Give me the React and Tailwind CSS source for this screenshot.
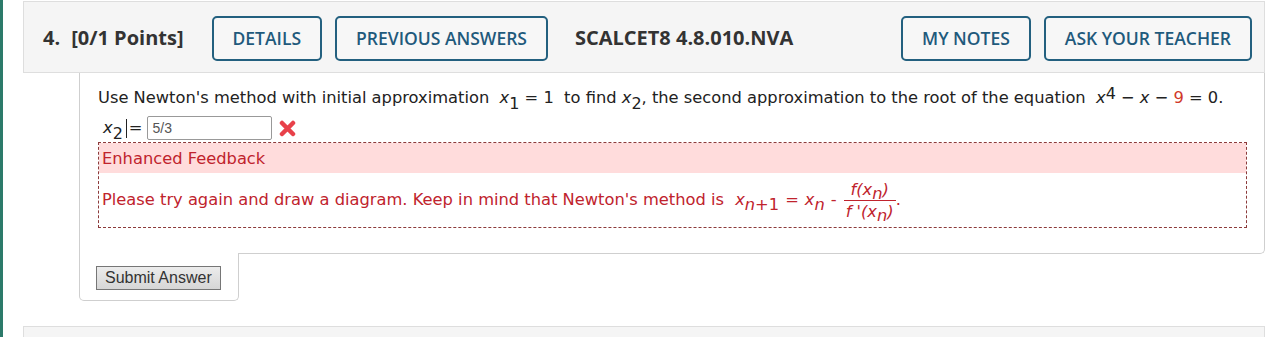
import React from 'react';

const btn =
  "h-[45px] px-[19px] pt-[2px] rounded-[5px] border-2 border-[#23607f] bg-[#f7f7f7] text-[#1f5a7c] text-[17.5px] font-semibold leading-none flex items-center";

const X = ({ sub }) => (
  <span className="italic whitespace-nowrap">
    x<sub className="not-italic text-[16px] relative top-[2px] align-sub leading-none">{sub}</sub>
  </span>
);

const App = () => {
  return (
    <div className="min-h-[337px] w-[1275px] overflow-hidden bg-white border-l-[3px] border-[#2c7a6a] pr-[10px]">
      {/* question header */}
      <div
        className="ml-[20px] mt-px h-[72px] flex items-center border border-[#dedede] bg-[#f5f5f5] pl-[19px] pr-[12px] pt-[2px] text-[#333]"
        style={{ fontFamily: '"Open Sans", sans-serif' }}
      >
        <span className="text-[20px] font-bold">4.</span>
        <span className="ml-[11px] text-[20px] font-bold">[0/1 Points]</span>
        <button className={btn + " ml-[28px]"}>DETAILS</button>
        <button className={btn + " ml-[13px]"}>PREVIOUS ANSWERS</button>
        <span className="ml-[27px] text-[20px] font-bold">SCALCET8 4.8.010.NVA</span>
        <div className="ml-auto flex gap-[13px]">
          <button className={btn}>MY NOTES</button>
          <button className={btn}>ASK YOUR TEACHER</button>
        </div>
      </div>

      {/* question body */}
      <div className="ml-[76px]" style={{ fontFamily: '"DejaVu Sans", Verdana, sans-serif' }}>
        <div className="border-l border-r border-b border-[#cfcfcf] rounded-br-[5px] bg-white pl-[18px] pr-[17px] pt-[13px] pb-[25px]">
          <p className="text-[16.3px] leading-[23px] text-[#222] whitespace-nowrap">
            Use Newton's method with initial approximation&nbsp; <X sub="1" /> = 1&nbsp; to find <X sub="2" />, the second
            approximation to the root of the equation&nbsp; <span className="italic">x</span>
            <sup className="text-[16px] relative -top-[4px] leading-none">4</sup> − <span className="italic">x</span> −{' '}
            <span className="text-[#d0392b]">9</span> = 0.
          </p>
          <div className="flex items-end h-[32px] pb-[2px] text-[16.3px] text-[#222]">
            <span className="ml-[5px]">
              <X sub="2" />
            </span>
            <span className="ml-[3px] mb-[2px] w-px h-[19px] bg-[#222]" />
            <span className="ml-[2px]">=</span>
            <input
              readOnly
              value="5/3"
              className="ml-[5px] w-[125px] h-[24px] border border-[#999] rounded-[2px] px-[4px] text-[14px] text-[#555] bg-white outline-none"
              style={{ fontFamily: '"Liberation Sans", Arial, sans-serif' }}
            />
            <svg className="ml-[7px] mb-[3px]" width="17" height="17" viewBox="0 0 17 17">
              <path d="M3 3 L14 14 M14 3 L3 14" stroke="#e8414a" strokeWidth="4.5" strokeLinecap="round" />
            </svg>
          </div>
          <div className="border border-dashed border-[#8c3b3b] text-[#c0232d]">
            <div className="h-[30px] flex items-center bg-[#ffdcdc] px-[3px] pt-[2px] text-[16.3px]">Enhanced Feedback</div>
            <div className="h-[54px] flex items-center px-[3px] text-[16.3px] whitespace-nowrap">
              <span>Please try again and draw a diagram. Keep in mind that Newton's method is&nbsp;</span>
              <span className="ml-[6px] italic">x</span>
              <span className="relative top-[5px]">
                <span className="italic">n</span>+1
              </span>
              <span className="ml-[6px]">=</span>
              <span className="ml-[6px] italic">x</span>
              <span className="italic relative top-[5px]">n</span>
              <span className="ml-[6px]">-</span>
              <span className="ml-[7px] inline-flex flex-col items-center leading-[21px] italic">
                <span className="px-[2px]">
                  f(x<span className="relative top-[4px]">n</span>)
                </span>
                <span className="px-[2px] border-t border-[#c0232d]">
                  f '(x<span className="relative top-[4px]">n</span>)
                </span>
              </span>
              <span>.</span>
            </div>
          </div>
        </div>
        <div className="-mt-px w-[160px] bg-white border-l border-r border-b border-[#cfcfcf] rounded-b-[5px] pl-[16px] pt-[13px] pb-[10px]">
          <button
            className="h-[24px] px-[8px] border border-[#767676] bg-gradient-to-b from-[#ececec] to-[#d6d6d6] text-[16px] text-[#333] leading-none"
            style={{ fontFamily: '"Liberation Sans", Arial, sans-serif' }}
          >
            Submit Answer
          </button>
        </div>
      </div>

      {/* next question header */}
      <div className="ml-[20px] mt-[25px] h-[40px] border border-[#dedede] bg-[#f5f5f5]" />
    </div>
  );
};

export default App;
